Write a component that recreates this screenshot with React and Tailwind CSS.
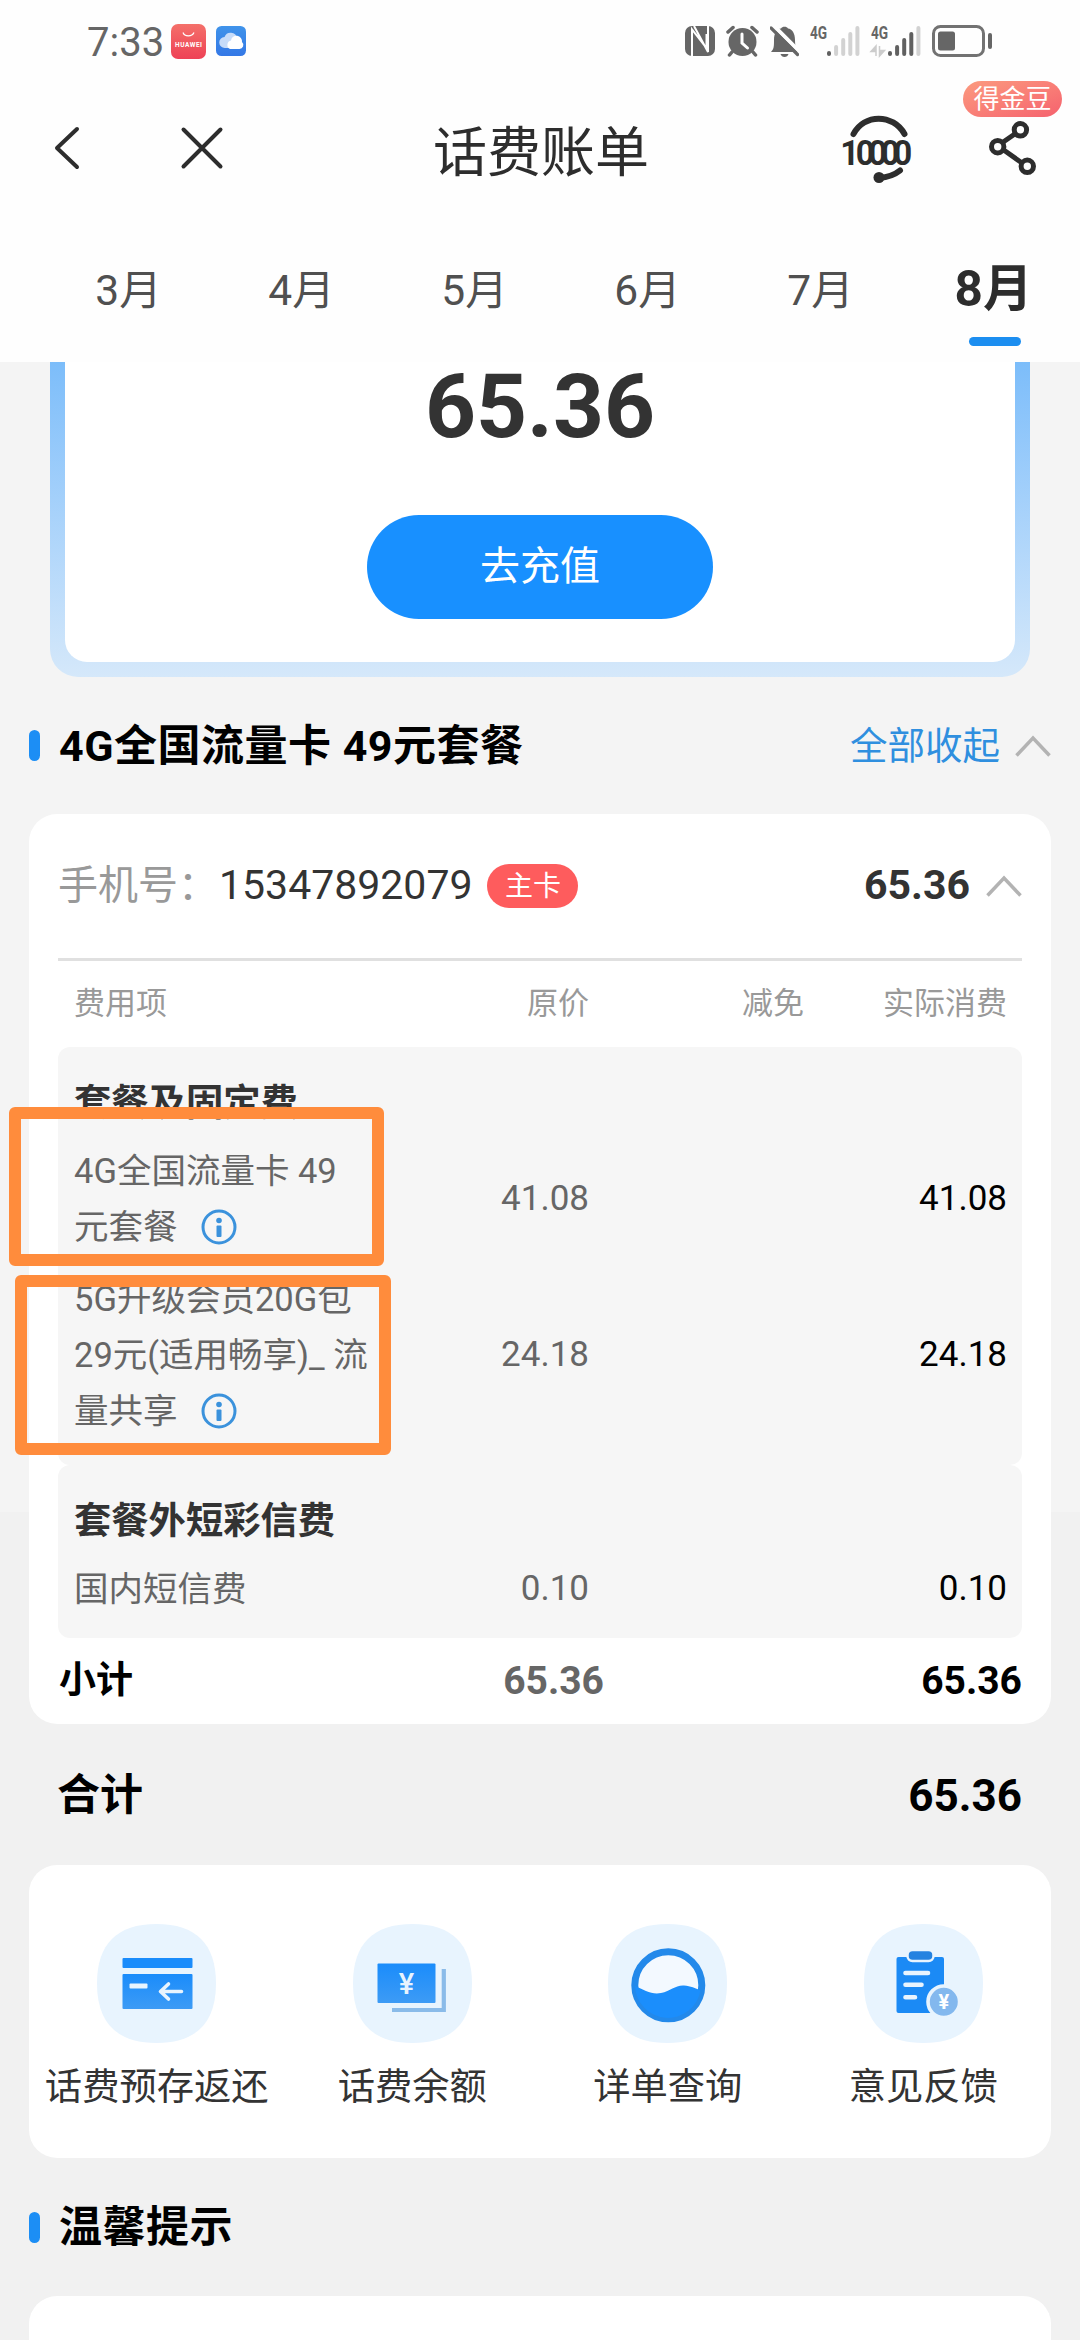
import React from 'react';

const months = ['3月', '4月', '5月', '6月', '7月', '8月'];

const feeGroups = [
  {
    title: '套餐及固定费',
    height: 'h-[418px]',
    items: [
      { lines: ['4G全国流量卡 49', '元套餐'], info: true, price: '41.08', actual: '41.08' },
      { lines: ['5G升级会员20G包', '29元(适用畅享)_ 流', '量共享'], info: true, price: '24.18', actual: '24.18' },
    ],
  },
  {
    title: '套餐外短彩信费',
    height: 'h-[173px]',
    items: [{ lines: ['国内短信费'], info: false, price: '0.10', actual: '0.10' }],
  },
];

const SignalIcon = ({ level, arrows }) => (
  <svg className="w-[50px] h-[38px] overflow-visible" viewBox="0 -3 50 38">
    <text transform="translate(0 14) scale(.76 1)" fontSize="18" fontWeight="700" fill="#666">4G</text>
    {[0, 1, 2, 3, 4].map((i) => (
      <line
        key={i}
        x1={19 + i * 7.1}
        x2={19 + i * 7.1}
        y1={[28, 22, 15, 9, 3][i]}
        y2="29"
        stroke={i < level ? '#606060' : '#d2d2d2'}
        strokeWidth="4"
        strokeLinecap="round"
      />
    ))}
    {arrows && <path d="M5 31V21L0 26.500H5M8.500 21V31L13.500 25.500H8.500" fill="#ccc" stroke="#ccc" strokeWidth="1.500" />}
  </svg>
);

const StatusBar = () => (
  <div className="flex items-center h-[82px] pl-[87px] pr-[87px] text-[#666]">
    <span className="text-[40px] leading-[40px] mt-[4px] w-[84px]">7:33</span>
    <svg className="w-[35px] h-[35px]" viewBox="0 0 35 35">
      <defs>
        <linearGradient id="hw" x1="0" y1="0" x2="0" y2="1">
          <stop offset="0" stopColor="#f4706a" />
          <stop offset="1" stopColor="#ee4156" />
        </linearGradient>
      </defs>
      <rect width="35" height="35" rx="7" fill="url(#hw)" />
      <path d="M12 8.500C13.500 13 21 13 23 8.500" fill="none" stroke="#fff" strokeWidth="1.200" />
      <text x="4" y="22.500" fontSize="6.500" fontWeight="700" fill="#fff" textLength="27">HUAWEI</text>
    </svg>
    <svg className="w-[30px] h-[30px] ml-[10px]" viewBox="0 0 30 30">
      <defs>
        <linearGradient id="cl" x1="0" y1="0" x2="0" y2="1">
          <stop offset="0" stopColor="#3f93ea" />
          <stop offset="1" stopColor="#3478e6" />
        </linearGradient>
      </defs>
      <rect width="30" height="30" rx="5.500" fill="url(#cl)" />
      <path d="M9 22a5.500 5.500 0 0 1-.5-11A6.500 6.500 0 0 1 21 12a5.500 5.500 0 0 1 1 10z" fill="#c7dcf9" />
      <path d="M14 23a4.500 4.500 0 0 1 1-8.500A5.500 5.500 0 0 1 26 16a4 4 0 0 1-3 7z" fill="#fff" />
    </svg>

    <div className="flex items-center gap-[11px] ml-auto">
      <svg className="w-[30px] h-[32px]" viewBox="0 0 30 32">
        <rect y="1" width="30" height="30" rx="7" fill="#666" />
        <path d="M7 31V4.500L21.500 23V9M9 1L23 27V1" fill="none" stroke="#fff" strokeWidth="2" />
      </svg>
      <svg className="w-[33px] h-[32px]" viewBox="0 0 33 32">
        <circle cx="16.500" cy="17" r="14" fill="#666" />
        <path d="M2 7L7 2.500M31 7L26 2.500M6 27L3.500 30M27 27L29.500 30" stroke="#666" strokeWidth="3.500" strokeLinecap="round" />
        <path d="M16 9V18L21.500 23" fill="none" stroke="#fff" strokeWidth="3" strokeLinecap="round" />
      </svg>
      <svg className="w-[29px] h-[32px]" viewBox="0 0 29 32">
        <path d="M1 27C4 24 4 21 4 15C4 8 7 4 11 3.500C12 1 17 1 18 3.500C22 4 25 8 25 15C25 21 26 24 28 27z" fill="#666" />
        <path d="M10.500 29H18.500Q17.500 32 14.500 32T10.500 29" fill="#666" />
        <path d="M4 1L31 28" stroke="#fff" strokeWidth="4" />
        <path d="M1 3L27.500 29.500" stroke="#666" strokeWidth="3.200" strokeLinecap="round" />
      </svg>
      <SignalIcon level={1} />
      <SignalIcon level={4} arrows />
      <svg className="w-[61px] h-[32px]" viewBox="0 0 61 32">
        <rect x="1.500" y="1.500" width="50" height="29" rx="7" fill="none" stroke="#727272" strokeWidth="3" />
        <rect x="6" y="6.500" width="17" height="19" rx="2.500" fill="#666" />
        <rect x="56" y="8" width="4" height="16" rx="2" fill="#666" />
      </svg>
    </div>
  </div>
);

const NavBar = () => (
  <div className="relative flex items-center h-[136px] pl-[54px] pr-[44px] -mt-[2px]">
    <svg className="w-[26px] h-[44px]" viewBox="0 0 26 44" fill="none" stroke="#2d2d2d" strokeWidth="4" strokeLinecap="round" strokeLinejoin="round">
      <path d="M23 3L3 22L23 41" />
    </svg>
    <svg className="w-[44px] h-[44px] ml-[100px]" viewBox="0 0 44 44" stroke="#2d2d2d" strokeWidth="4" strokeLinecap="round">
      <path d="M3.500 3.500L40.500 40.500M40.500 3.500L3.500 40.500" />
    </svg>
    <h1 className="flex-1 pl-[209px] text-[54px] leading-[60px] font-normal text-[#2d2d2d] mt-[11px]">话费账单</h1>
    <svg className="w-[70px] h-[68px] mr-[76px] mt-[3px] overflow-visible" viewBox="0 0 70 68">
      <path d="M10.500 18C21 -2.500 50 -2.500 61.500 18" fill="none" stroke="#2d2d2d" strokeWidth="6" strokeLinecap="round" />
      <text transform="translate(0 49) scale(.92 1)" x="-3 13.900 27.500 41 54.500" fontSize="36" fontWeight="700" fill="#2d2d2d">10000</text>
      <circle cx="36" cy="61.500" r="5.500" fill="#2d2d2d" />
      <path d="M36 62Q49 61 57 54.500" fill="none" stroke="#2d2d2d" strokeWidth="6" strokeLinecap="round" />
    </svg>
    <svg className="w-[47px] h-[54px]" viewBox="0 0 47 54" fill="none" stroke="#2d2d2d" strokeWidth="5">
      <circle cx="31.400" cy="8.800" r="6.200" />
      <circle cx="8.700" cy="25.700" r="6.200" />
      <circle cx="38.300" cy="45.300" r="6.200" />
      <path d="M13.500 21.500L26.500 12.500M14 28.500L33 42" />
    </svg>
    <span className="absolute top-[1px] left-[963px] w-[99px] h-[36px] rounded-full bg-linear-to-br from-[#fb9a7f] to-[#f5616e] text-white text-[26px] leading-[37px] text-center">
      得金豆
    </span>
  </div>
);

const MonthTabs = () => (
  <div className="flex h-[146px] pl-[42px] text-[#505050]">
    {months.map((month) => (
      <div key={month} className="w-[173px] flex flex-col items-center">
        {month === '8月' ? (
          <>
            <span className="text-[49.500px] leading-[60px] mt-[43px] font-bold text-[#2d2d2d]">{month}</span>
            <span className="w-[52px] h-[9px] mt-[18px] ml-[2px] rounded-full bg-[#1c8ef0]" />
          </>
        ) : (
          <span className="text-[42.500px] leading-[60px] mt-[45px]">{month}</span>
        )}
      </div>
    ))}
  </div>
);

const ChevronUp = () => (
  <svg className="w-[36px] h-[22px]" viewBox="0 0 36 22" fill="none" stroke="#b3b3b3" strokeWidth="3.500">
    <path d="M1.500 20.500L18 3L34.500 20.500" />
  </svg>
);

const InfoIcon = () => (
  <svg className="inline-block w-[36px] h-[36px] ml-[23px] -mt-[5px]" viewBox="0 0 36 36">
    <circle cx="18" cy="18" r="16" fill="none" stroke="#3b92dc" strokeWidth="3" />
    <circle cx="18" cy="11.500" r="2.800" fill="#3b92dc" />
    <rect x="15.500" y="16.500" width="5" height="11.500" rx="1" fill="#3b92dc" />
  </svg>
);

const SectionTitle = ({ children }) => (
  <div className="flex items-center">
    <span className="w-[11px] h-[31px] rounded-full bg-[#1c8ef5] mr-[19px]" />
    <h2 className="text-[43px] leading-[60px] font-bold tracking-[0.5px] text-black">{children}</h2>
  </div>
);

const FeeGroup = ({ group }) => (
  <div className={`bg-[#f6f6f6] rounded-[12px] pl-[16px] pt-[26px] ${group.height}`}>
    <h3 className="text-[37.300px] leading-[60px] mb-[2px] font-bold text-[#333]">{group.title}</h3>
    {group.items.map((item) => (
      <div key={item.price} className="grid grid-cols-[299px_216px_215px_203px] items-center py-[8px] text-[35px] text-right text-[#666]">
        <div className="text-[34.500px] leading-[56px] text-left whitespace-nowrap">
          {item.lines.map((line, i) => (
            <div key={line}>
              {line}
              {item.info && i === item.lines.length - 1 && <InfoIcon />}
            </div>
          ))}
        </div>
        <span>{item.price}</span>
        <span />
        <span className="text-black">{item.actual}</span>
      </div>
    ))}
  </div>
);

const IconBase = ({ children }) => (
  <svg className="w-[119px] h-[119px]" viewBox="0 0 119 119">
    <defs>
      <linearGradient id="blue" x1="0" y1="0" x2="0" y2="1">
        <stop offset="0" stopColor="#1a8cfb" />
        <stop offset="1" stopColor="#3d9bf5" />
      </linearGradient>
    </defs>
    <path d="M59.500 0C99 0 119 20 119 59.500S99 119 59.500 119S0 99 0 59.500S20 0 59.500 0z" fill="#e8f4fe" />
    {children}
  </svg>
);

const services = [
  {
    label: '话费预存返还',
    icon: (
      <IconBase>
        <rect x="25.500" y="34" width="70" height="10" rx="1" fill="#1a8cfb" />
        <rect x="25.500" y="50" width="70" height="35" rx="1" fill="url(#blue)" />
        <rect x="32.500" y="59.500" width="18" height="5" rx="1" fill="#e8f4fe" />
        <path d="M84.500 67.500H64M71.500 60L63.500 67.500L71.500 75" fill="none" stroke="#e8f4fe" strokeWidth="3.600" strokeLinecap="round" strokeLinejoin="round" />
      </IconBase>
    ),
  },
  {
    label: '话费余额',
    icon: (
      <IconBase>
        <rect x="24.500" y="39.500" width="58" height="39.500" rx="1" fill="url(#blue)" />
        <path d="M90.800 45V86H39" fill="none" stroke="#8abbe9" strokeWidth="4.200" />
        <text x="53.500" y="70" fontSize="29" fontWeight="500" fill="#e8f4fe" textAnchor="middle">¥</text>
      </IconBase>
    ),
  },
  {
    label: '详单查询',
    icon: (
      <IconBase>
        <circle cx="60.300" cy="61.300" r="33.500" fill="#f3f9ff" stroke="#2389ea" strokeWidth="7" />
        <path d="M27 62C36 66 44 71 53 69C63 67 67 61 76 61.500C83 62 87 64 92.500 66.500A33 33 0 0 1 27 62z" fill="#1b8efc" />
      </IconBase>
    ),
  },
  {
    label: '意见反馈',
    icon: (
      <IconBase>
        <rect x="32.500" y="33" width="47.500" height="56" rx="2" fill="#1b8af5" />
        <rect x="43.500" y="26" width="26" height="11" rx="5" fill="#2482e0" stroke="#e8f4fe" strokeWidth="2.500" />
        <path d="M41.500 49H64M41.500 60.800H57.500M41.500 73.200H51" stroke="#e8f4fe" strokeWidth="4.600" strokeLinecap="round" />
        <circle cx="79.800" cy="77.800" r="15.800" fill="#83b8ee" stroke="#e8f4fe" strokeWidth="3.600" />
        <text x="79.800" y="85" fontSize="20" fontWeight="700" fill="#fff" textAnchor="middle">¥</text>
      </IconBase>
    ),
  },
];

const App = () => {
  return (
    <div className="relative w-[1080px] h-[2340px] overflow-hidden bg-[linear-gradient(#f4f4f4_1512px,#f1f1f1_1512px)] font-['Roboto','Noto_Sans_CJK_SC',sans-serif]">
      <header className="h-[362px] bg-[#fefefe]">
        <StatusBar />
        <NavBar />
        <MonthTabs />
      </header>

      <section className="mx-[50px] h-[315px] px-[15px] pb-[15px] rounded-b-[28px] bg-linear-to-b from-[#7cbdfa] to-[#d5e8fa]">
        <div className="flex flex-col items-center h-full bg-white rounded-b-[22px]">
          <span className="text-[89px] leading-[90px] font-bold text-[#333]">65.36</span>
          <button className="w-[346px] h-[104px] mt-[63px] rounded-full bg-[#1890ff] text-white text-[40px]">去充值</button>
        </div>
      </section>

      <div className="flex items-center justify-between h-[137px] pl-[29px] pr-[29px]">
        <SectionTitle>4G全国流量卡 49元套餐</SectionTitle>
        <div className="flex items-center gap-[15px]">
          <span className="text-[37.500px] leading-[60px] text-[#2f8fdf]">全部收起</span>
          <ChevronUp />
        </div>
      </div>

      <section className="mx-[29px] px-[29px] h-[910px] rounded-[28px] bg-white">
        <div className="flex items-center h-[147px] border-b-[3px] border-[#e0e0e0] text-[40px] text-[#333]">
          <span className="text-[#999]">手机号：</span>
          <span className="text-[41px] ml-px">15347892079</span>
          <span className="w-[91px] h-[44px] ml-[15px] rounded-full bg-[#fe5c5d] text-white text-[28px] leading-[45px] text-center">主卡</span>
          <span className="ml-auto mr-[16px] text-[41px] font-bold">65.36</span>
          <ChevronUp />
        </div>
        <div className="grid grid-cols-[299px_216px_215px_203px] items-center h-[86px] pt-px pl-[16px] text-[31px] text-right text-[#999]">
          <span className="text-left">费用项</span>
          <span>原价</span>
          <span>减免</span>
          <span>实际消费</span>
        </div>
        {feeGroups.map((group) => (
          <FeeGroup key={group.title} group={group} />
        ))}
        <div className="flex items-center h-[86px] pl-px text-[39px] font-bold text-black">
          <span className="text-[37px]">小计</span>
          <span className="w-[471px] text-right text-[#666]">65.36</span>
          <span className="ml-auto">65.36</span>
        </div>
      </section>

      <div className="flex items-center justify-between h-[141px] pt-[2px] pl-[57px] pr-[58px] font-bold text-black">
        <span className="text-[43px]">合计</span>
        <span className="text-[44px]">65.36</span>
      </div>

      <section className="grid grid-cols-4 mx-[29px] h-[293px] pt-[59px] rounded-[28px] bg-white">
        {services.map((service) => (
          <div key={service.label} className="flex flex-col items-center">
            {service.icon}
            <span className="mt-[14px] text-[37.300px] leading-[60px] text-[#333] whitespace-nowrap">{service.label}</span>
          </div>
        ))}
      </section>

      <div className="flex items-center h-[138px] pl-[29px]">
        <SectionTitle>温馨提示</SectionTitle>
      </div>
      <section className="mx-[29px] h-[80px] rounded-t-[28px] bg-white" />

      {/* marker boxes over the two plan rows */}
      <div className="absolute left-[9px] top-[1107px] w-[375px] h-[159px] border-[12px] border-[#ff8c3c] rounded-[6px]" />
      <div className="absolute left-[15px] top-[1275px] w-[376px] h-[180px] border-[12px] border-[#ff8c3c] rounded-[6px]" />
    </div>
  );
};

export default App;
